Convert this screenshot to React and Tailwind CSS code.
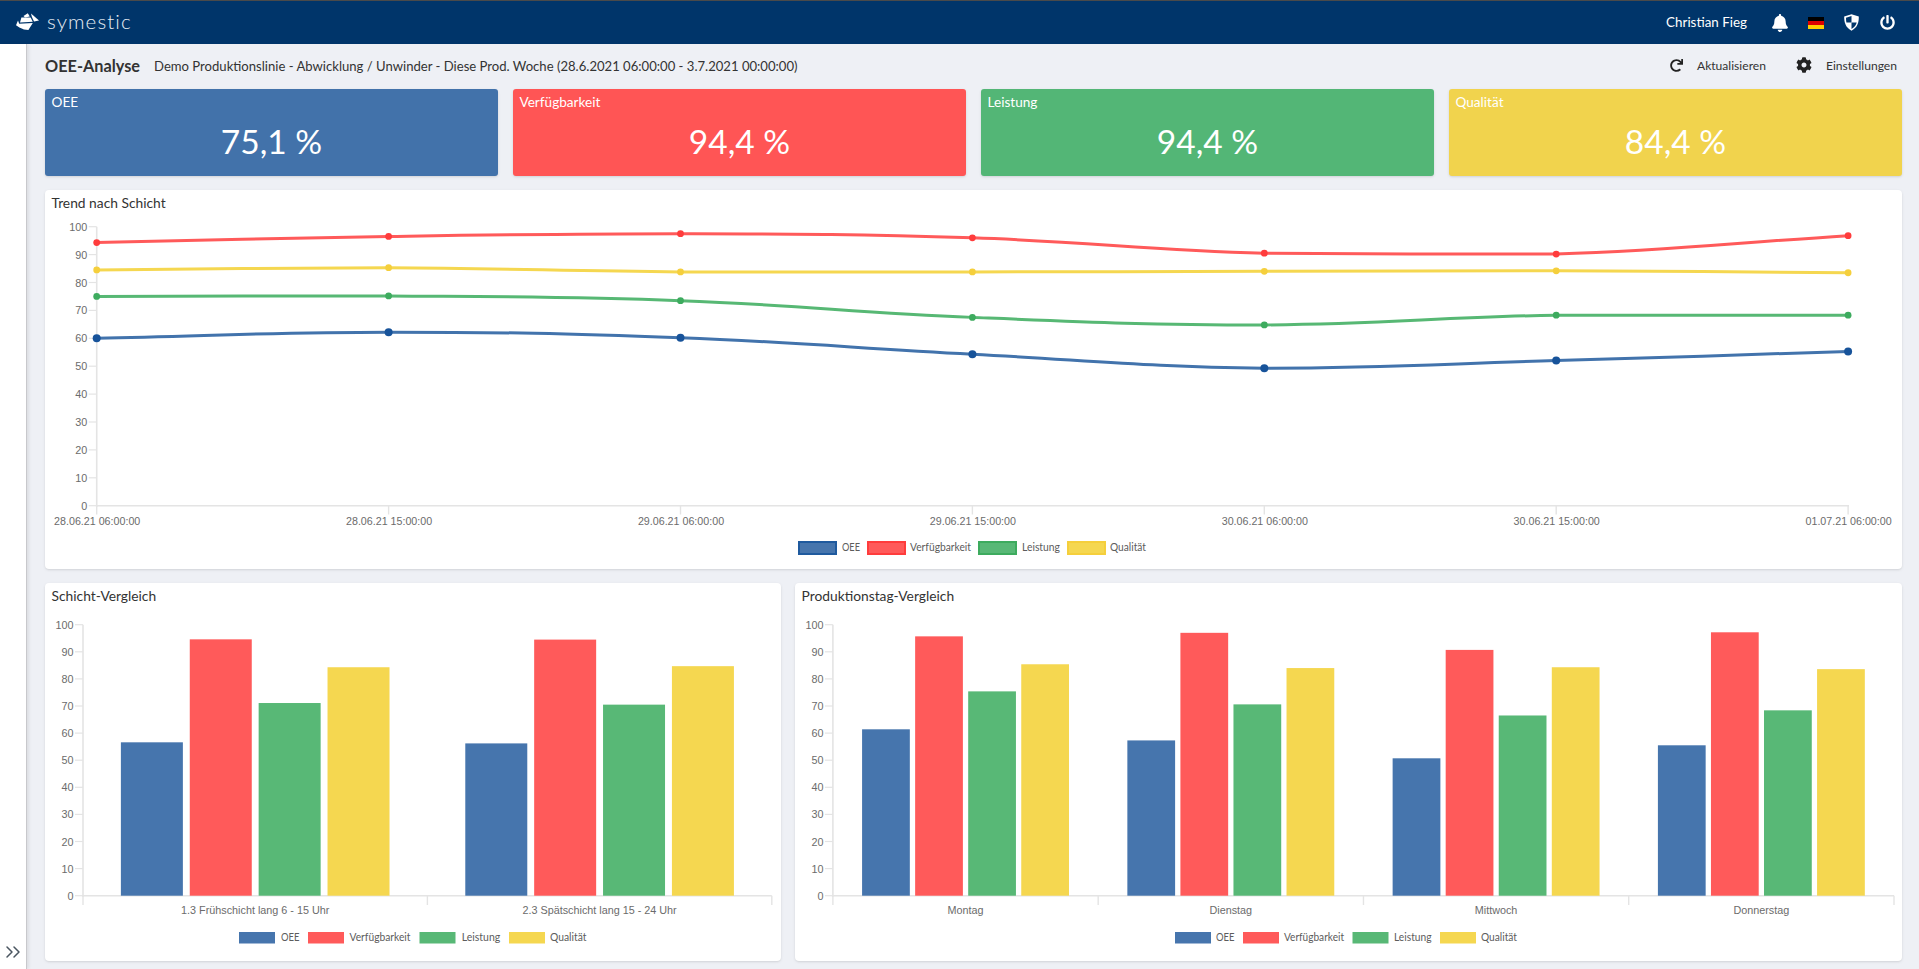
import React from "react";
import { FaBell, FaCog, FaPowerOff, FaRedo } from "react-icons/fa";
import { ChevronsRight } from "lucide-react";

const C = {
  blue: "#4675ad",
  red: "#ff5a5a",
  green: "#58b876",
  yellow: "#f5d750",
};
const LINE = [
  { c: "#4273ac", p: "#17539a", r: 4, d: [60, 62.2, 60.2, 54.3, 49.3, 52, 55.3] },
  { c: "#ff5a5a", p: "#ff3c3c", r: 3.4, d: [94.3, 96.5, 97.5, 96, 90.5, 90.2, 96.8] },
  { c: "#57b874", p: "#3dab5e", r: 3.4, d: [75, 75.2, 73.5, 67.5, 64.8, 68.3, 68.3] },
  { c: "#f5d750", p: "#f5cf3c", r: 3.4, d: [84.5, 85.3, 83.8, 83.8, 84, 84.2, 83.5] },
];
const LABELS = [
  "28.06.21 06:00:00",
  "28.06.21 15:00:00",
  "29.06.21 06:00:00",
  "29.06.21 15:00:00",
  "30.06.21 06:00:00",
  "30.06.21 15:00:00",
  "01.07.21 06:00:00",
];
const TICKS = [0, 10, 20, 30, 40, 50, 60, 70, 80, 90, 100];
const AXIS = "#e4e4e4";
const TICKTEXT = "#6b6b6b";

function splinePath(pts, t = 0.4) {
  const cps = pts.map((p, i) => {
    const a = pts[i - 1] || p;
    const b = pts[i + 1] || p;
    const d1 = Math.hypot(p[0] - a[0], p[1] - a[1]);
    const d2 = Math.hypot(b[0] - p[0], b[1] - p[1]);
    const s = d1 + d2 || 1;
    const fa = (t * d1) / s;
    const fb = (t * d2) / s;
    return {
      prev: [p[0] - fa * (b[0] - a[0]), p[1] - fa * (b[1] - a[1])],
      next: [p[0] + fb * (b[0] - a[0]), p[1] + fb * (b[1] - a[1])],
    };
  });
  const clamp = (v, a, b) => Math.min(Math.max(v, Math.min(a, b)), Math.max(a, b));
  let d = `M${pts[0][0]} ${pts[0][1]}`;
  for (let i = 1; i < pts.length; i++) {
    const y0 = pts[i - 1][1];
    const y1 = pts[i][1];
    d += ` C${cps[i - 1].next[0]} ${clamp(cps[i - 1].next[1], y0, y1)} ${cps[i].prev[0]} ${clamp(cps[i].prev[1], y0, y1)} ${pts[i][0]} ${y1}`;
  }
  return d;
}

function YAxis({ x, top, zero, size = 10.8 }) {
  const step = (zero - top) / 10;
  return (
    <g>
      <line x1={x} x2={x} y1={top} y2={zero + 1} stroke={AXIS} strokeWidth="1.6" />
      {TICKS.map((v) => {
        const y = zero - (v / 10) * step;
        return (
          <g key={v}>
            <line x1={x - 8} x2={x} y1={y} y2={y} stroke={AXIS} strokeWidth="1.2" />
            <text x={x - 9.5} y={y} textAnchor="end" dominantBaseline="central" fontSize={size} fill={TICKTEXT}>
              {v}
            </text>
          </g>
        );
      })}
    </g>
  );
}

function LegendText({ x, y, w, children }) {
  return (
    <text x={x} y={y} dominantBaseline="central" fontSize="10.5" fill="#5c5c5c" className="font-['Lato',sans-serif]" textLength={w} lengthAdjust="spacingAndGlyphs">
      {children}
    </text>
  );
}

function TrendChart() {
  const xs = LABELS.map((_, i) => 96.7 + i * 291.9);
  const top = 226.7;
  const zero = 505.7;
  const yOf = (v) => zero - (v / 100) * (zero - top);
  const legend = [
    { x: 798, tx: 842, tw: 18, f: "#4675ad", s: "#1f5a9e", label: "OEE" },
    { x: 867, tx: 910, tw: 61, f: "#ff5a5a", s: "#ff3c3c", label: "Verfügbarkeit" },
    { x: 978, tx: 1022, tw: 38, f: "#58b876", s: "#3dab5e", label: "Leistung" },
    { x: 1067, tx: 1110, tw: 36, f: "#f5d750", s: "#f5cf3c", label: "Qualität" },
  ];
  return (
    <svg viewBox="45 216 1857 353" className="block w-full flex-1 font-['Liberation_Sans',Arial,sans-serif]">
      <YAxis x={96.7} top={top} zero={zero} />
      <line x1={96} x2={1849} y1={zero} y2={zero} stroke={AXIS} strokeWidth="1.6" />
      {xs.map((x, i) => (
        <g key={i}>
          <line x1={x} x2={x} y1={zero} y2={514.5} stroke={AXIS} strokeWidth="1.4" />
          <text x={x + 0.5} y={521} textAnchor="middle" dominantBaseline="central" fontSize="10.7" fill={TICKTEXT}>
            {LABELS[i]}
          </text>
        </g>
      ))}
      {LINE.map((l) => {
        const pts = l.d.map((v, i) => [xs[i], yOf(v)]);
        return (
          <g key={l.c}>
            <path d={splinePath(pts)} fill="none" stroke={l.c} strokeWidth="3" />
            {pts.map((p, i) => (
              <circle key={i} cx={p[0]} cy={p[1]} r={l.r} fill={l.p} />
            ))}
          </g>
        );
      })}
      {legend.map((l) => (
        <g key={l.label}>
          <rect x={l.x + 1} y={542} width={37} height={12} fill={l.f} stroke={l.s} strokeWidth="2" />
          <LegendText x={l.tx} y={546.7} w={l.tw}>
            {l.label}
          </LegendText>
        </g>
      ))}
    </svg>
  );
}

function BarChart({ viewBox, x0, x1, groups, labels, legend, legendY }) {
  const top = 624.7;
  const zero = 895.7;
  const cat = (x1 - x0) / groups.length;
  const slot = (cat * 0.8) / 4;
  const bw = slot * 0.9;
  const colors = [C.blue, C.red, C.green, C.yellow];
  return (
    <svg viewBox={viewBox} className="block w-full flex-1 font-['Liberation_Sans',Arial,sans-serif]">
      <YAxis x={x0} top={top} zero={zero} />
      <line x1={x0 - 1} x2={x1} y1={zero} y2={zero} stroke={AXIS} strokeWidth="1.6" />
      {groups.map((g, gi) => {
        const gx = x0 + gi * cat + cat * 0.1;
        return (
          <g key={gi}>
            <line x1={x0 + gi * cat} x2={x0 + gi * cat} y1={zero} y2={905} stroke={AXIS} strokeWidth="1.4" />
            {g.map((v, i) => {
              const h = (v / 100) * (zero - top);
              return (
                <rect
                  key={i}
                  x={gx + i * slot + (slot - bw) / 2}
                  y={zero - h}
                  width={bw}
                  height={h}
                  fill={colors[i]}
                />
              );
            })}
            <text x={x0 + (gi + 0.5) * cat} y={910} textAnchor="middle" dominantBaseline="central" fontSize="10.8" fill={TICKTEXT}>
              {labels[gi]}
            </text>
          </g>
        );
      })}
      <line x1={x1} x2={x1} y1={zero} y2={905} stroke={AXIS} strokeWidth="1.4" />
      {legend.map((l, i) => (
        <g key={l.label}>
          <rect x={l.x} y={legendY} width={36} height={11.5} fill={colors[i]} />
          <LegendText x={l.tx} y={legendY + 5} w={l.tw}>
            {l.label}
          </LegendText>
        </g>
      ))}
    </svg>
  );
}

function Logo() {
  return (
    <svg viewBox="0 0 23 17" className="mb-[2px] h-[17px] w-[23px] shrink-0" fill="#fff">
      <polygon points="7.5,3 11.8,0.2 13.8,3.6 9,4.6" />
      <polygon points="15,0.4 23,7.6 18,8.6 15.8,3.8" />
      <polygon points="5.4,4.4 14.6,4.4 16.8,8.8 4,9.6" />
      <polygon points="2,7.6 3.2,10.8 16.8,10 12.4,17 8,16.4 3.4,14.6 0,12.2" />
    </svg>
  );
}

function ShieldIcon() {
  return (
    <svg viewBox="0 0 15 17" className="h-[17px] w-[15px]">
      <path d="M7.5 0.2 L14.8 2.6 C14.9 8 13.8 13.4 7.5 16.8 C1.2 13.4 0.1 8 0.2 2.6 Z" fill="#fff" />
      <path d="M7.5 2 L2 3.8 C2 5.5 2.1 7 2.4 8.4 L7.5 8.4 Z" fill="#00356a" />
      <path d="M7.5 8.4 L12.7 8.4 C12.1 10.8 10.7 13.1 7.5 14.9 Z" fill="#00356a" />
    </svg>
  );
}

function Flag() {
  return (
    <div className="flex h-[12px] w-[16px] flex-col">
      <div className="flex-1 bg-black" />
      <div className="flex-1 bg-[#dd0000]" />
      <div className="flex-1 bg-[#ffce00]" />
    </div>
  );
}

function Kpi({ title, value, color }) {
  return (
    <div className={`flex-1 rounded-[3px] ${color} pl-[6.5px] pt-[4px] text-white shadow-sm`}>
      <div className="text-[13.6px] leading-[18px]">{title}</div>
      <div className="mt-[8px] pr-[6.5px] text-center text-[33.5px] leading-[44px] font-normal">{value}</div>
    </div>
  );
}

function Card({ title, className, children }) {
  return (
    <div className={`flex flex-col rounded-[4px] bg-white shadow-sm ${className}`}>
      <div className="h-[26px] shrink-0 pl-[6.5px] pt-[4px] text-[13.8px] leading-[18px] text-[#333]">{title}</div>
      {children}
    </div>
  );
}

export default function App() {
  return (
    <div className="flex h-screen flex-col overflow-hidden bg-[#eef0f5] font-['Lato',sans-serif] text-[#333]">
      <header className="flex h-[44px] shrink-0 items-center border-t border-[#4a4a4a] bg-[#00356a] text-white">
        <div className="ml-[16px] flex items-center gap-[8px]">
          <Logo />
          <span className="mb-[3px] text-[20.5px] leading-none font-light tracking-[1.1px] text-[#e6edf4]">symestic</span>
        </div>
        <div className="ml-auto flex items-center pr-[24px]">
          <span className="text-[13.4px] leading-none">Christian Fieg</span>
          <FaBell className="ml-[25px] h-[18px] w-[16px]" />
          <div className="ml-[20px]"><Flag /></div>
          <div className="ml-[20px] flex"><ShieldIcon /></div>
          <FaPowerOff className="ml-[21px] h-[15px] w-[15px]" />
        </div>
      </header>
      <div className="flex min-h-0 flex-1">
        <aside className="relative z-10 flex w-[27px] shrink-0 flex-col items-center justify-end border-r border-[#c8c8cc] bg-white pb-[5px] shadow-[2px_0_3px_rgba(0,0,0,0.08)]">
          <ChevronsRight className="h-[24px] w-[24px] text-[#4a5560]" strokeWidth={1.5} />
        </aside>
        <main className="flex min-w-0 flex-1 flex-col pl-[18px] pr-[17px]">
          <div className="flex h-[45px] shrink-0 items-center">
            <h1 className="text-[16.3px] font-bold">OEE-Analyse</h1>
            <span className="ml-[14px] text-[13.1px]">
              Demo Produktionslinie - Abwicklung / Unwinder - Diese Prod. Woche (28.6.2021 06:00:00 - 3.7.2021 00:00:00)
            </span>
            <div className="ml-auto flex items-center pr-[5px] text-[12.1px]">
              <FaRedo className="mb-[3px] h-[13px] w-[13px] text-[#222]" />
              <span className="ml-[14px]">Aktualisieren</span>
              <FaCog className="mb-[3px] ml-[30px] h-[16px] w-[16px] text-[#222]" />
              <span className="ml-[14px]">Einstellungen</span>
            </div>
          </div>
          <div className="flex h-[87px] shrink-0 gap-[15px]">
            <Kpi title="OEE" value="75,1 %" color="bg-[#4272aa]" />
            <Kpi title="Verfügbarkeit" value="94,4 %" color="bg-[#ff5555]" />
            <Kpi title="Leistung" value="94,4 %" color="bg-[#53b676]" />
            <Kpi title="Qualität" value="84,4 %" color="bg-[#f1d34d]" />
          </div>
          <Card title="Trend nach Schicht" className="mt-[14px] h-[379px] shrink-0">
            <TrendChart />
          </Card>
          <div className="mt-[14px] flex h-[378px] shrink-0 gap-[14px]">
            <Card title="Schicht-Vergleich" className="w-[736px] shrink-0">
              <BarChart
                viewBox="45 609 736 352"
                x0={83}
                x1={771.8}
                groups={[
                  [56.6, 94.6, 71.1, 84.3],
                  [56.2, 94.5, 70.5, 84.7],
                ]}
                labels={["1.3 Frühschicht lang 6 - 15 Uhr", "2.3 Spätschicht lang 15 - 24 Uhr"]}
                legendY={932}
                legend={[
                  { x: 239, tx: 281, tw: 18.5, label: "OEE" },
                  { x: 308, tx: 349.5, tw: 61, label: "Verfügbarkeit" },
                  { x: 419.5, tx: 461.7, tw: 38.5, label: "Leistung" },
                  { x: 509, tx: 550, tw: 36.5, label: "Qualität" },
                ]}
              />
            </Card>
            <Card title="Produktionstag-Vergleich" className="min-w-0 flex-1">
              <BarChart
                viewBox="795 609 1107 352"
                x0={832.9}
                x1={1894}
                groups={[
                  [61.4, 95.7, 75.4, 85.4],
                  [57.3, 97, 70.6, 84],
                  [50.7, 90.7, 66.5, 84.3],
                  [55.5, 97.2, 68.4, 83.6],
                ]}
                labels={["Montag", "Dienstag", "Mittwoch", "Donnerstag"]}
                legendY={932}
                legend={[
                  { x: 1175, tx: 1216, tw: 18.5, label: "OEE" },
                  { x: 1243, tx: 1284, tw: 60, label: "Verfügbarkeit" },
                  { x: 1352.5, tx: 1394, tw: 37.5, label: "Leistung" },
                  { x: 1440, tx: 1481, tw: 36, label: "Qualität" },
                ]}
              />
            </Card>
          </div>
        </main>
      </div>
    </div>
  );
}
